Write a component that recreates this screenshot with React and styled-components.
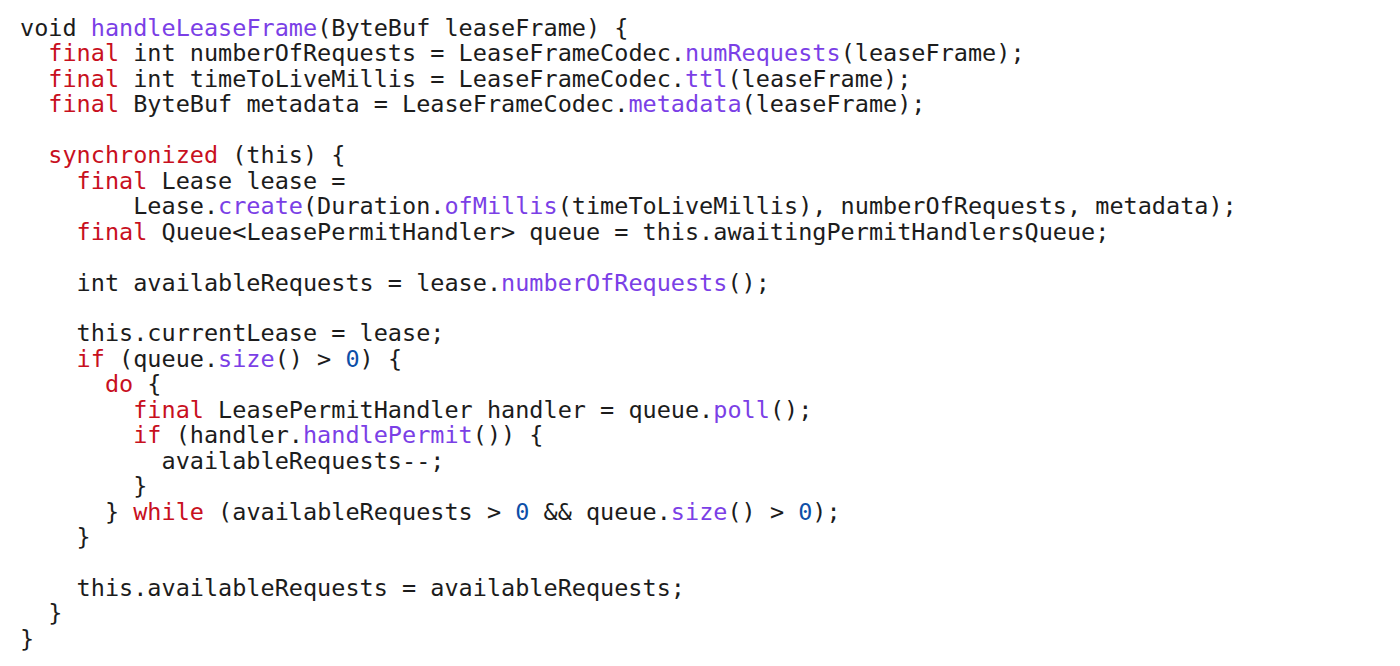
import React from "react";
import styled, { createGlobalStyle } from "styled-components";

const Global = createGlobalStyle`
  html, body { margin: 0; padding: 0; background: #ffffff; }
`;

const Page = styled.div`
  width: 1400px;
  height: 666px;
  background: #ffffff;
  box-sizing: border-box;
  padding: 16px 0 0 20px;
  overflow: hidden;
`;

const Code = styled.pre`
  margin: 0;
  font-family: "DejaVu Sans Mono", "Liberation Mono", monospace;
  font-size: 23.5px;
  line-height: 25.46px;
  color: #1c1c1c;
  white-space: pre;
`;

const Line = styled.div`
  height: 25.46px;
`;

const colors = {
  kw: "#c8101e",
  fn: "#7b3fe6",
  num: "#0d4fa8",
};

const Tok = styled.span`
  color: ${(p) => colors[p.$k] || "inherit"};
`;

const K = ({ children }) => <Tok $k="kw">{children}</Tok>;
const F = ({ children }) => <Tok $k="fn">{children}</Tok>;
const N = ({ children }) => <Tok $k="num">{children}</Tok>;

const lines = [
  <>void <F>handleLeaseFrame</F>(ByteBuf leaseFrame) {"{"}</>,
  <>  <K>final</K> int numberOfRequests = LeaseFrameCodec.<F>numRequests</F>(leaseFrame);</>,
  <>  <K>final</K> int timeToLiveMillis = LeaseFrameCodec.<F>ttl</F>(leaseFrame);</>,
  <>  <K>final</K> ByteBuf metadata = LeaseFrameCodec.<F>metadata</F>(leaseFrame);</>,
  <></>,
  <>  <K>synchronized</K> (this) {"{"}</>,
  <>    <K>final</K> Lease lease =</>,
  <>        Lease.<F>create</F>(Duration.<F>ofMillis</F>(timeToLiveMillis), numberOfRequests, metadata);</>,
  <>    <K>final</K> Queue&lt;LeasePermitHandler&gt; queue = this.awaitingPermitHandlersQueue;</>,
  <></>,
  <>    int availableRequests = lease.<F>numberOfRequests</F>();</>,
  <></>,
  <>    this.currentLease = lease;</>,
  <>    <K>if</K> (queue.<F>size</F>() &gt; <N>0</N>) {"{"}</>,
  <>      <K>do</K> {"{"}</>,
  <>        <K>final</K> LeasePermitHandler handler = queue.<F>poll</F>();</>,
  <>        <K>if</K> (handler.<F>handlePermit</F>()) {"{"}</>,
  <>          availableRequests--;</>,
  <>        {"}"}</>,
  <>      {"}"} <K>while</K> (availableRequests &gt; <N>0</N> &amp;&amp; queue.<F>size</F>() &gt; <N>0</N>);</>,
  <>    {"}"}</>,
  <></>,
  <>    this.availableRequests = availableRequests;</>,
  <>  {"}"}</>,
  <>{"}"}</>,
];

export default function App() {
  return (
    <>
      <Global />
      <Page>
        <Code>
          {lines.map((l, i) => (
            <Line key={i}>{l}</Line>
          ))}
        </Code>
      </Page>
    </>
  );
}
